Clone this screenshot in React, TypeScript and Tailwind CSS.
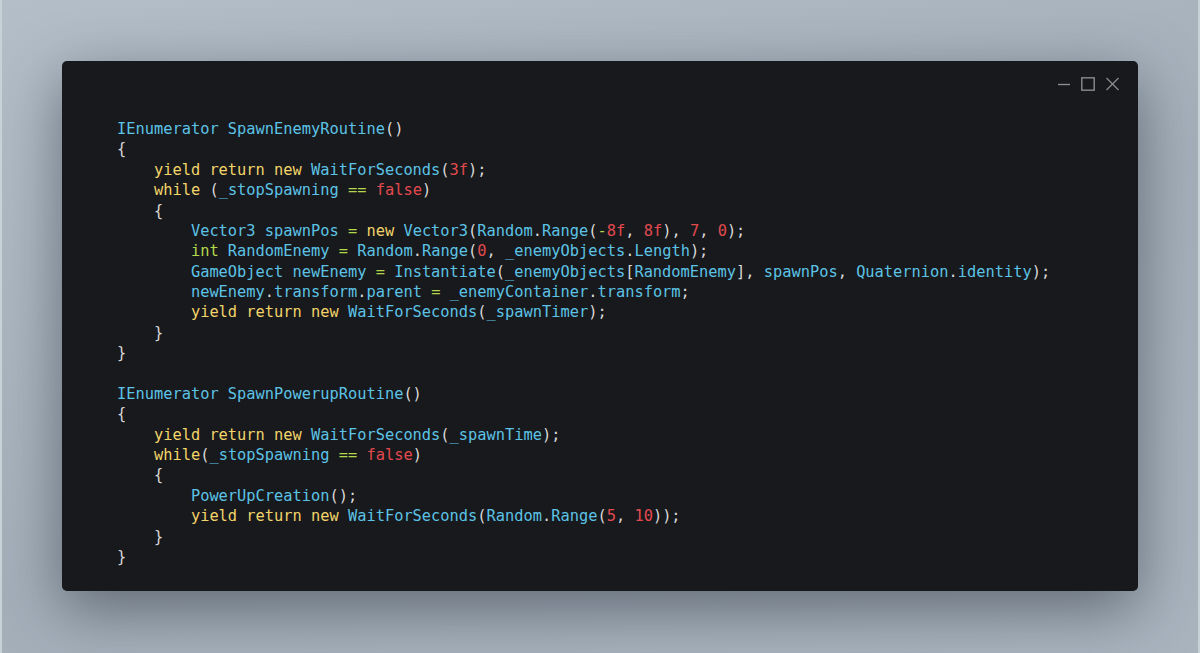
import React from "react";

type Seg = [string, string];

const B = "text-[#5cc3e6]";
const Y = "text-[#f2d46a]";
const G = "text-[#b4d84c]";
const R = "text-[#e24a4f]";
const W = "text-[#d8d8d8]";

const lines: Seg[][] = [
  [["IEnumerator SpawnEnemyRoutine", B], ["()", W]],
  [["{", W]],
  [["    ", W], ["yield return new ", Y], ["WaitForSeconds", B], ["(", W], ["3f", R], [");", W]],
  [["    ", W], ["while", Y], [" (", W], ["_stopSpawning ", B], ["==", G], [" ", W], ["false", R], [")", W]],
  [["    {", W]],
  [
    ["        ", W], ["Vector3 spawnPos ", B], ["=", G], [" ", W], ["new ", Y], ["Vector3", B], ["(", W],
    ["Random", B], [".", W], ["Range", B], ["(", W], ["-", G], ["8f", R], [", ", W], ["8f", R], ["), ", W],
    ["7", R], [", ", W], ["0", R], [");", W],
  ],
  [
    ["        ", W], ["int ", G], ["RandomEnemy ", B], ["=", G], [" ", W], ["Random", B], [".", W], ["Range", B],
    ["(", W], ["0", R], [", ", W], ["_enemyObjects", B], [".", W], ["Length", B], [");", W],
  ],
  [
    ["        ", W], ["GameObject newEnemy ", B], ["=", G], [" ", W], ["Instantiate", B], ["(", W],
    ["_enemyObjects", B], ["[", W], ["RandomEnemy", B], ["], ", W], ["spawnPos", B], [", ", W],
    ["Quaternion", B], [".", W], ["identity", B], [");", W],
  ],
  [
    ["        ", W], ["newEnemy", B], [".", W], ["transform", B], [".", W], ["parent ", B], ["=", G], [" ", W],
    ["_enemyContainer", B], [".", W], ["transform", B], [";", W],
  ],
  [["        ", W], ["yield return new ", Y], ["WaitForSeconds", B], ["(", W], ["_spawnTimer", B], [");", W]],
  [["    }", W]],
  [["}", W]],
  [["", W]],
  [["IEnumerator SpawnPowerupRoutine", B], ["()", W]],
  [["{", W]],
  [["    ", W], ["yield return new ", Y], ["WaitForSeconds", B], ["(", W], ["_spawnTime", B], [");", W]],
  [["    ", W], ["while", Y], ["(", W], ["_stopSpawning ", B], ["==", G], [" ", W], ["false", R], [")", W]],
  [["    {", W]],
  [["        ", W], ["PowerUpCreation", B], ["();", W]],
  [
    ["        ", W], ["yield return new ", Y], ["WaitForSeconds", B], ["(", W], ["Random", B], [".", W], ["Range", B],
    ["(", W], ["5", R], [", ", W], ["10", R], ["));", W],
  ],
  [["    }", W]],
  [["}", W]],
];

export default function App() {
  return (
    <div className="w-[1200px] h-[653px] bg-[linear-gradient(160deg,#b3bec8_0%,#a4afba_55%,#a9b4bf_100%)] border-l-2 border-r-2 border-l-[#c9d1d8] border-r-[#c9d1d8] flex items-start pt-[61px] pl-[60px] overflow-hidden">
      <div className="relative w-[1076px] h-[530px] rounded-[5px] bg-[#18191c] shadow-[0_18px_60px_rgba(40,48,58,0.55)] pl-[55px] pt-[58px]">
        <div className="absolute top-[16px] right-[19px] flex items-center gap-[11px]">
          <svg width="12" height="14" viewBox="0 0 12 14">
            <line x1="0" y1="7.5" x2="12" y2="7.5" stroke="#8c8c8c" strokeWidth="1.4" />
          </svg>
          <svg width="14" height="14" viewBox="0 0 14 14">
            <rect x="0.8" y="0.8" width="12.4" height="12.4" fill="none" stroke="#8c8c8c" strokeWidth="1.4" />
          </svg>
          <svg width="13" height="14" viewBox="0 0 13 14">
            <line x1="0.5" y1="1" x2="12.5" y2="13" stroke="#8c8c8c" strokeWidth="1.3" />
            <line x1="12.5" y1="1" x2="0.5" y2="13" stroke="#8c8c8c" strokeWidth="1.3" />
          </svg>
        </div>
        <pre className="font-['DejaVu_Sans_Mono',monospace] text-[15.35px] leading-[20.38px] whitespace-pre">
          {lines.map((segs, i) => (
            <div key={i} className="h-[20.38px]">
              {segs.map((s, j) => (
                <span key={j} className={s[1]}>
                  {s[0]}
                </span>
              ))}
            </div>
          ))}
        </pre>
      </div>
    </div>
  );
}
